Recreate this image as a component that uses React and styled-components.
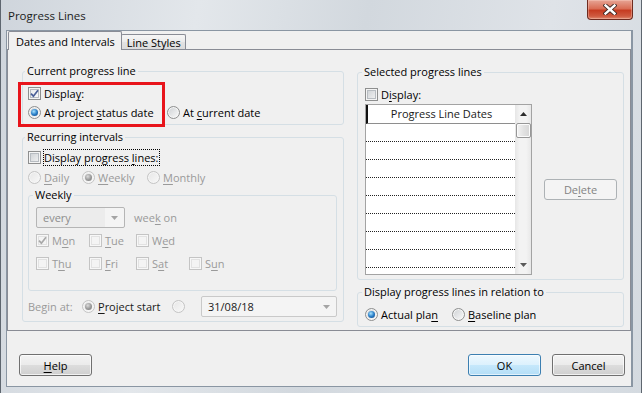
import styled, { createGlobalStyle } from "styled-components";

const GlobalStyle = createGlobalStyle`
  html, body {
    margin: 0;
    padding: 0;
  }
  body {
    width: 642px;
    height: 393px;
    overflow: hidden;
    background: #d7dce2;
    font-family: "Open Sans", "Noto Sans", sans-serif;
    font-size: 11px;
    line-height: 15px;
    color: #000;
  }
`;

const Window = styled.div`
  width: 642px;
  height: 393px;
  box-sizing: border-box;
  display: flex;
  flex-direction: column;
  border-left: 1px solid #5e666f;
  border-right: 1px solid #5e666f;
  background: linear-gradient(100deg, #cfd5dc 0%, #e3e7eb 28%, #d2d8de 52%, #dfe3e8 78%, #d4dae0 100%);
`;

const TitleBar = styled.div`
  height: 30px;
  display: flex;
  align-items: flex-start;
  flex: none;
`;

const Title = styled.div`
  margin: 8px 0 0 7px;
  font-size: 11.5px;
  line-height: 16px;
  color: #1b1b1b;
`;

const CloseButton = styled.div`
  margin: 0 8px 0 auto;
  width: 46px;
  height: 20px;
  box-sizing: border-box;
  border: 1px solid #6e2b20;
  border-top: none;
  border-radius: 0 0 4px 4px;
  background: linear-gradient(#e7a595 0%, #d96d55 45%, #c63c22 55%, #cf5a40 85%, #e08a70 100%);
  box-shadow: inset 0 0 0 1px rgba(255, 220, 210, 0.35);
  display: flex;
  align-items: center;
  justify-content: center;
`;

const Client = styled.div`
  margin: 0 8px 0 5px;
  height: 357px;
  box-sizing: border-box;
  border: 1px solid #8a96a3;
  border-right-width: 2px;
  background: #f0f0f0;
  display: flex;
  flex-direction: column;
  flex: none;
`;

const TabStrip = styled.div`
  height: 18px;
  display: flex;
  align-items: flex-end;
  padding-left: 1px;
  position: relative;
  z-index: 1;
`;

const Tab = styled.div`
  position: relative;
  box-sizing: border-box;
  border: 1px solid #898c95;
  border-bottom: none;
  border-radius: 2px 2px 0 0;
  display: flex;
  align-items: center;
  ${(p) =>
    p.$active
      ? `
    height: 19px;
    margin-bottom: -1px;
    padding: 0 6px 0 7px;
    background: #f0f0f0;
    z-index: 2;
  `
      : `
    height: 15px;
    margin-left: -1px;
    padding: 0 4px 0 5px;
    background: linear-gradient(#f6f6f6, #ebebeb 50%, #e3e3e3 50%, #dcdcdc);
  `}
`;

const TabPanel = styled.div`
  height: 282px;
  box-sizing: border-box;
  border: 1px solid #898c95;
  padding: 13px 6px 0 14px;
  display: grid;
  grid-template-columns: 322px 267px;
  column-gap: 13px;
  align-items: start;
`;

const Column = styled.div`
  display: flex;
  flex-direction: column;
`;

const Group = styled.fieldset`
  margin: ${(p) => p.$mt || 0}px 0 0 0;
  min-width: 0;
  box-sizing: border-box;
  border: 1px solid #d5dfe5;
  border-radius: 3px;
  padding: ${(p) => p.$pad};
`;

const Legend = styled.legend`
  padding: 0 2px;
  margin-left: -3px;
  line-height: 16px;
  color: #000;
`;

const Row = styled.div`
  display: flex;
  align-items: center;
  height: ${(p) => p.$h || 19}px;
  margin-top: ${(p) => p.$mt || 0}px;
`;

const Highlight = styled.div`
  position: relative;
`;

const RedFrame = styled.div`
  position: absolute;
  left: -10px;
  top: -2px;
  width: 147px;
  height: 45px;
  box-sizing: border-box;
  border: 3px solid #e8141b;
  pointer-events: none;
`;

const Opt = styled.label`
  display: inline-flex;
  align-items: center;
  gap: 3px;
  flex: none;
  width: ${(p) => (p.$w ? `${p.$w}px` : "auto")};
  color: ${(p) => (p.$disabled ? "#9a9a9a" : "#000")};
  white-space: nowrap;
`;

const Text = styled.span`
  color: ${(p) => p.$color || "inherit"};
  ${(p) =>
    p.$focus
      ? `
    outline: 1px dotted #000;
    outline-offset: 0;
    padding: 0 1px 0 0;
  `
      : ""}
`;

const Key = styled.u`
  text-decoration: underline;
  text-underline-offset: 2px;
`;

const BoxMark = styled.span`
  width: 13px;
  height: 13px;
  box-sizing: border-box;
  flex: none;
  display: flex;
  align-items: center;
  justify-content: center;
  border: 1px solid ${(p) => (p.$disabled ? "#c4c4c4" : "#8e8f8f")};
  background: ${(p) =>
    p.$disabled
      ? "#f4f4f4"
      : p.$checked
      ? "linear-gradient(135deg, #e6e8ea, #fdfdfd)"
      : "linear-gradient(135deg, #c9cdd1, #f6f6f6)"};
  box-shadow: ${(p) =>
    p.$disabled
      ? "inset 0 0 0 1px #f7f7f7, inset 0 0 0 2px #e2e2e2"
      : "inset 0 0 0 1px #f4f4f4, inset 0 0 0 2px #b7bcc1"};
`;

const RadioMark = styled.span`
  width: 13px;
  height: 13px;
  box-sizing: border-box;
  border-radius: 50%;
  flex: none;
  display: flex;
  align-items: center;
  justify-content: center;
  border: 1px solid ${(p) => (p.$disabled ? "#c4c4c4" : "#8e8f8f")};
  background: ${(p) =>
    p.$disabled
      ? "linear-gradient(135deg, #e6e6e6, #f8f8f8)"
      : "linear-gradient(135deg, #cdd0d3, #fbfbfb)"};
  box-shadow: inset 0 0 0 1px #f6f6f6;
`;

const Dot = styled.span`
  width: 7px;
  height: 7px;
  border-radius: 50%;
  background: ${(p) =>
    p.$disabled
      ? "radial-gradient(circle at 40% 35%, #dcdcdc 0%, #989898 55%, #7a7a7a 100%)"
      : "radial-gradient(circle at 40% 35%, #a9e4ff 0%, #2a7fc8 50%, #0f3f7c 100%)"};
`;

function Check({ checked, disabled, w, focus, children }) {
  return (
    <Opt $w={w} $disabled={disabled}>
      <BoxMark $checked={checked} $disabled={disabled}>
        {checked && (
          <svg width="9" height="9" viewBox="0 0 9 9">
            <path
              d="M1 4.6 L3.4 7.2 L8 1.2"
              fill="none"
              stroke={disabled ? "#a8a8a8" : "#4a5f97"}
              strokeWidth="1.7"
            />
          </svg>
        )}
      </BoxMark>
      <Text $focus={focus}>{children}</Text>
    </Opt>
  );
}

function Radio({ checked, disabled, w, color, children }) {
  return (
    <Opt $w={w} $disabled={disabled}>
      <RadioMark $disabled={disabled}>{checked && <Dot $disabled={disabled} />}</RadioMark>
      {children && <Text $color={color}>{children}</Text>}
    </Opt>
  );
}

const Select = styled.div`
  width: ${(p) => p.$w}px;
  height: 21px;
  box-sizing: border-box;
  flex: none;
  border: 1px solid ${(p) => (p.$light ? "#c9c9c9" : "#b5b5b5")};
  border-radius: 2px;
  background: ${(p) => (p.$light ? "#f4f4f4" : "linear-gradient(90deg, #ececec 78%, #f4f4f4 78%)")};
  display: flex;
  align-items: center;
  justify-content: space-between;
  padding: 0 6px;
  color: ${(p) => (p.$dim ? "#8c8c8c" : "#1a1a1a")};
`;

const Caret = () => (
  <svg width="7" height="4" viewBox="0 0 7 4">
    <path d="M0 0 H7 L3.5 4 Z" fill="#a4a4a4" />
  </svg>
);

const DimText = styled.span`
  color: #9a9a9a;
  margin-left: ${(p) => p.$ml || 0}px;
  width: ${(p) => (p.$w ? `${p.$w}px` : "auto")};
  flex: none;
`;

const Days = styled.div`
  display: grid;
  grid-template-columns: 53px 47px 53px auto;
  align-items: center;
  height: 20px;
  margin-top: ${(p) => p.$mt}px;
`;

const ListArea = styled.div`
  display: flex;
  align-items: flex-start;
`;

const ListCol = styled.div`
  display: flex;
  flex-direction: column;
  width: 167px;
`;

const List = styled.div`
  height: 171px;
  box-sizing: border-box;
  border: 1px solid #a3a3a3;
  display: flex;
  background: #fff;
`;

const ListBody = styled.div`
  flex: 1;
  overflow: hidden;
`;

const ListHeader = styled.div`
  height: 19px;
  box-sizing: border-box;
  border-left: 2px solid #111;
  border-bottom: 1px solid #8e8e8e;
  text-align: center;
  line-height: 18px;
  color: #1a1a1a;
`;

const ListRow = styled.div`
  height: 18px;
  box-sizing: border-box;
  border-bottom: 1px dotted #222;
`;

const ScrollBar = styled.div`
  width: 16px;
  display: flex;
  flex-direction: column;
  align-items: center;
  background: linear-gradient(90deg, #e6e6e6, #f3f3f3 30%, #f3f3f3 70%, #e8e8e8);
`;

const ScrollArrow = styled.div`
  height: 18px;
  display: flex;
  align-items: center;
  justify-content: center;
  width: 100%;
`;

const Thumb = styled.div`
  width: 15px;
  height: 15px;
  box-sizing: border-box;
  border: 1px solid #979797;
  border-radius: 2px;
  background: linear-gradient(90deg, #f4f4f4, #e2e2e2 50%, #d6d6d6);
  box-shadow: inset 0 0 0 1px #fbfbfb;
`;

const Track = styled.div`
  flex: 1;
`;

const Button = styled.div`
  width: 73px;
  height: ${(p) => p.$h || 22}px;
  box-sizing: border-box;
  flex: none;
  border-radius: 3px;
  display: flex;
  align-items: center;
  justify-content: center;
  margin-left: ${(p) => p.$ml || "0"};
  margin-top: ${(p) => p.$mt || 0}px;
  ${(p) =>
    p.$disabled
      ? `
    border: 1px solid #adb2b5;
    background: #f4f4f4;
    color: #838383;
  `
      : p.$default
      ? `
    border: 1px solid #3c7fb1;
    background: linear-gradient(#eef8fe 0%, #dcf1fd 50%, #c6e8fb 50%, #b4def7 100%);
    box-shadow: inset 0 0 0 1px rgba(255,255,255,0.6);
    color: #000;
  `
      : `
    border: 1px solid #707070;
    background: linear-gradient(#f3f3f3 0%, #ebebeb 50%, #dddddd 50%, #cfcfcf 100%);
    box-shadow: inset 0 0 0 1px rgba(255,255,255,0.7);
    color: #000;
  `}
`;

const ButtonBar = styled.div`
  display: flex;
  align-items: center;
  margin-top: 23px;
  padding: 0 6px 0 12px;
`;

const rows = Array.from({ length: 9 }, (_, i) => i);

export default function App() {
  return (
    <>
      <GlobalStyle />
      <Window>
        <TitleBar>
          <Title>Progress Lines</Title>
          <CloseButton>
            <svg width="14" height="11" viewBox="0 0 14 11">
              <path d="M2.5 1.5 L11.5 9.5 M11.5 1.5 L2.5 9.5" stroke="#3b2622" strokeWidth="4.2" strokeLinecap="square" />
              <path d="M2.5 1.5 L11.5 9.5 M11.5 1.5 L2.5 9.5" stroke="#fff" strokeWidth="2.4" strokeLinecap="square" />
            </svg>
          </CloseButton>
        </TitleBar>

        <Client>
          <TabStrip>
            <Tab $active>Dates and Intervals</Tab>
            <Tab>Line Styles</Tab>
          </TabStrip>

          <TabPanel>
            <Column>
              <Group $pad="5px 6px 2px 5px">
                <Legend>Current progress line</Legend>
                <Highlight>
                  <Row>
                    <Check checked>
                      Displa<Key>y</Key>:
                    </Check>
                  </Row>
                  <Row>
                    <Radio checked w={139}>
                      At project <Key>s</Key>tatus date
                    </Radio>
                    <Radio>
                      At <Key>c</Key>urrent date
                    </Radio>
                  </Row>
                  <RedFrame />
                </Highlight>
              </Group>

              <Group $mt={4} $pad="3px 6px 4px 5px">
                <Legend>Recurring intervals</Legend>
                <Row>
                  <Check focus>
                    Display progress <Key>l</Key>ines:
                  </Check>
                </Row>
                <Row $h={20}>
                  <Radio disabled w={54}>
                    <Key>D</Key>aily
                  </Radio>
                  <Radio disabled checked w={65}>
                    <Key>W</Key>eekly
                  </Radio>
                  <Radio disabled>
                    <Key>M</Key>onthly
                  </Radio>
                </Row>

                <Group $pad="4px 6px 17px 7px">
                  <Legend>Weekly</Legend>
                  <Row $h={21}>
                    <Select $w={89} $dim>
                      every
                      <Caret />
                    </Select>
                    <DimText $ml={9}>
                      wee<Key>k</Key> on
                    </DimText>
                  </Row>
                  <Days $mt={2}>
                    <Check disabled checked>
                      M<Key>o</Key>n
                    </Check>
                    <Check disabled>
                      <Key>T</Key>ue
                    </Check>
                    <Check disabled>
                      W<Key>e</Key>d
                    </Check>
                    <span />
                  </Days>
                  <Days $mt={3}>
                    <Check disabled>
                      T<Key>h</Key>u
                    </Check>
                    <Check disabled>
                      <Key>F</Key>ri
                    </Check>
                    <Check disabled>
                      S<Key>a</Key>t
                    </Check>
                    <Check disabled>
                      S<Key>u</Key>n
                    </Check>
                  </Days>
                </Group>

                <Row $h={21} $mt={5}>
                  <DimText $w={54}>Begin at:</DimText>
                  <Radio disabled checked w={90} color="#1a1a1a">
                    <Key>P</Key>roject start
                  </Radio>
                  <Radio disabled w={29} />
                  <Select $w={136} $light>
                    31/08/18
                    <Caret />
                  </Select>
                </Row>
              </Group>
            </Column>

            <Column>
              <Group $mt={1} $pad="4px 6px 4px 7px">
                <Legend>Selected progress lines</Legend>
                <ListArea>
                  <ListCol>
                    <Row $h={20}>
                      <Check>
                        D<Key>i</Key>splay:
                      </Check>
                    </Row>
                    <List>
                      <ListBody>
                        <ListHeader>Progress Line Dates</ListHeader>
                        {rows.map((r) => (
                          <ListRow key={r} />
                        ))}
                      </ListBody>
                      <ScrollBar>
                        <ScrollArrow>
                          <svg width="7" height="4" viewBox="0 0 7 4">
                            <path d="M0 4 H7 L3.5 0 Z" fill="#2c2c2c" />
                          </svg>
                        </ScrollArrow>
                        <Thumb />
                        <Track />
                        <ScrollArrow>
                          <svg width="7" height="4" viewBox="0 0 7 4">
                            <path d="M0 0 H7 L3.5 4 Z" fill="#5a5a5a" />
                          </svg>
                        </ScrollArrow>
                      </ScrollBar>
                    </List>
                  </ListCol>
                  <Button $disabled $h={21} $ml="12px" $mt={95}>
                    De<Key>l</Key>ete
                  </Button>
                </ListArea>
              </Group>

              <Group $mt={4} $pad="4px 6px 2px 7px">
                <Legend>Display progress lines in relation to</Legend>
                <Row $h={20}>
                  <Radio checked w={87}>
                    Actual pla<Key>n</Key>
                  </Radio>
                  <Radio>
                    <Key>B</Key>aseline plan
                  </Radio>
                </Row>
              </Group>
            </Column>
          </TabPanel>

          <ButtonBar>
            <Button>
              <Key>H</Key>elp
            </Button>
            <Button $default $ml="auto">
              OK
            </Button>
            <Button $ml="11px">Cancel</Button>
          </ButtonBar>
        </Client>
      </Window>
    </>
  );
}
